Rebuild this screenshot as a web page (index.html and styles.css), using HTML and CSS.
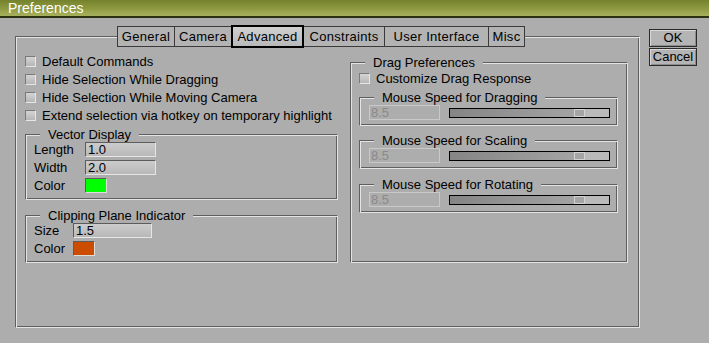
FILE: index.html
```html
<!DOCTYPE html>
<html>
<head>
<meta charset="utf-8">
<title>Preferences</title>
<link rel="stylesheet" href="styles.css">
</head>
<body>
<div class="titlebar">Preferences</div>
<div class="dialog">
  <div class="panel">
    <div class="tabs">
      <div class="tab t-general">General</div>
      <div class="tab t-camera">Camera</div>
      <div class="tab t-advanced active">Advanced</div>
      <div class="tab t-constraints">Constraints</div>
      <div class="tab t-ui">User Interface</div>
      <div class="tab t-misc">Misc</div>
    </div>
    <div class="content">
      <div class="col-left">
        <div class="check"><span class="box"></span>Default Commands</div>
        <div class="check"><span class="box"></span>Hide Selection While Dragging</div>
        <div class="check"><span class="box"></span>Hide Selection While Moving Camera</div>
        <div class="check"><span class="box"></span>Extend selection via hotkey on temporary highlight</div>
        <div class="group vector">
          <div class="group-title">Vector Display</div>
          <div class="fields">
            <span class="lbl">Length</span><span class="input">1.0</span>
            <span class="lbl">Width</span><span class="input">2.0</span>
            <span class="lbl">Color</span><span class="swatch green"></span>
          </div>
        </div>
        <div class="group clip">
          <div class="group-title">Clipping Plane Indicator</div>
          <div class="fields">
            <span class="lbl">Size</span><span class="input">1.5</span>
            <span class="lbl">Color</span><span class="swatch orange"></span>
          </div>
        </div>
      </div>
      <div class="group drag">
        <div class="group-title">Drag Preferences</div>
        <div class="check"><span class="box"></span>Customize Drag Response</div>
        <div class="group sub">
          <div class="group-title">Mouse Speed for Dragging</div>
          <div class="sub-row">
            <span class="dis">8.5</span>
            <div class="slider"><span class="fill"></span><span class="thumb"></span><span class="rest"></span></div>
          </div>
        </div>
        <div class="group sub">
          <div class="group-title">Mouse Speed for Scaling</div>
          <div class="sub-row">
            <span class="dis">8.5</span>
            <div class="slider"><span class="fill"></span><span class="thumb"></span><span class="rest"></span></div>
          </div>
        </div>
        <div class="group sub">
          <div class="group-title">Mouse Speed for Rotating</div>
          <div class="sub-row">
            <span class="dis">8.5</span>
            <div class="slider"><span class="fill"></span><span class="thumb"></span><span class="rest"></span></div>
          </div>
        </div>
      </div>
    </div>
  </div>
  <div class="buttons">
    <div class="btn">OK</div>
    <div class="btn">Cancel</div>
  </div>
</div>
</body>
</html>
```
FILE: styles.css
```css
* { box-sizing: border-box; }
html, body { margin: 0; }
body {
  width: 709px;
  height: 343px;
  overflow: hidden;
  background: #adadad;
  font-family: "Liberation Sans", Arial, sans-serif;
  font-size: 13px;
  color: #000;
}
.titlebar {
  height: 18px;
  border-bottom: 2px solid #2f3212;
  background: linear-gradient(#75822d, #8e9a40 55%, #a5ae5a 92%);
  color: #fff;
  font-size: 14px;
  line-height: 16px;
  padding-left: 8px;
}
.dialog {
  display: flex;
  align-items: flex-start;
  padding: 18px 0 0 15px;
}
.panel {
  width: 625px;
  height: 292px;
  border: 1px solid;
  border-color: #5f5f5f #e4e4e4 #e4e4e4 #5f5f5f;
  box-shadow: inset 1px 1px #e4e4e4, inset -1px -1px #5f5f5f;
}
.tabs {
  display: flex;
  height: 21px;
  margin-top: -11px;
  padding-left: 101px;
}
.tab {
  height: 21px;
  line-height: 20px;
  border: 1px solid #3a3a3a;
  background: #b3b3b3;
  text-align: center;
  margin-left: -1px;
  letter-spacing: 0.3px;
}
.tab:first-child { margin-left: 0; }
.tab.active {
  position: relative;
  height: 23px;
  margin-top: -1px;
  border: 2px solid #000;
  background: linear-gradient(#d0d0d0, #b9b9b9);
  line-height: 20px;
}
.t-general { width: 58px; }
.t-camera { width: 58px; }
.t-advanced { width: 73px; }
.t-constraints { width: 82px; }
.t-ui { width: 105px; }
.t-misc { width: 37px; }

.content {
  display: flex;
  column-gap: 12px;
  padding: 5px 11px 0 9px;
}
.col-left { width: 313px; }
.check {
  display: flex;
  align-items: center;
  height: 18px;
  white-space: nowrap;
}
.box {
  width: 11px;
  height: 11px;
  margin-right: 6px;
  border: 1px solid;
  border-color: #7a7a7a #e6e6e6 #e6e6e6 #7a7a7a;
  background: linear-gradient(#d4d4d4, #b6b6b6);
}
.group {
  border: 1px solid;
  border-color: #5f5f5f #e4e4e4 #e4e4e4 #5f5f5f;
  box-shadow: inset 1px 1px #e4e4e4, inset -1px -1px #5f5f5f;
}
.group-title {
  width: fit-content;
  height: 14px;
  line-height: 14px;
  margin: -7px 0 0 6px;
  padding: 0 8px;
  background: #adadad;
  white-space: nowrap;
}
.vector { margin-top: 10px; padding: 0 0 6px 8px; }
.clip { margin-top: 15px; padding: 0 0 6px 8px; }
.fields {
  display: grid;
  grid-template-columns: 51px 71px;
  grid-auto-rows: 15px;
  row-gap: 3px;
  align-items: center;
}
.clip .fields { grid-template-columns: 39px 79px; }
.lbl { line-height: 15px; }
.input {
  height: 15px;
  padding-left: 2px;
  line-height: 13px;
  border: 1px solid;
  border-color: #5c5c5c #e6e6e6 #e6e6e6 #5c5c5c;
  background: linear-gradient(#cccccc, #b8b8b8);
}
.swatch {
  width: 22px;
  height: 15px;
  border: 1px solid;
  border-color: #5c5c5c #dedede #dedede #5c5c5c;
}
.green { background: #00ff00; }
.orange { background: #cc4c00; }

.drag {
  width: 278px;
  margin-top: 10px;
  padding: 0 9px 0 8px;
}
.drag .check { height: 16px; }
.sub { margin-top: 14px; padding: 0 7px 5px 9px; }
.drag .check + .sub { margin-top: 11px; }
.sub:last-child { margin-top: 15px; }
.sub .group-title { margin-left: 5px; }
.sub-row {
  display: flex;
  align-items: center;
  gap: 9px;
  height: 15px;
}
.dis {
  width: 71px;
  height: 15px;
  padding-left: 1px;
  line-height: 13px;
  border: 1px solid #c9c9c9;
  color: #8a8a8a;
}
.slider {
  display: flex;
  width: 161px;
  height: 10px;
  border: 1px solid #000;
}
.fill {
  width: 124px;
  background: linear-gradient(to right, #858585, #a3a3a3);
}
.thumb {
  width: 11px;
  border: 1px solid #d2d2d2;
  background: #a5a5a5;
}
.rest { flex: 1; background: #bababa; }

.buttons {
  display: flex;
  flex-direction: column;
  gap: 1px;
  margin: -7px 0 0 9px;
}
.btn {
  width: 48px;
  height: 18px;
  line-height: 16px;
  text-align: center;
  border: 1px solid #2a2a2a;
  box-shadow: inset 1px 1px #d8d8d8, inset -1px -1px #8c8c8c;
  background: #b4b4b4;
}
```
